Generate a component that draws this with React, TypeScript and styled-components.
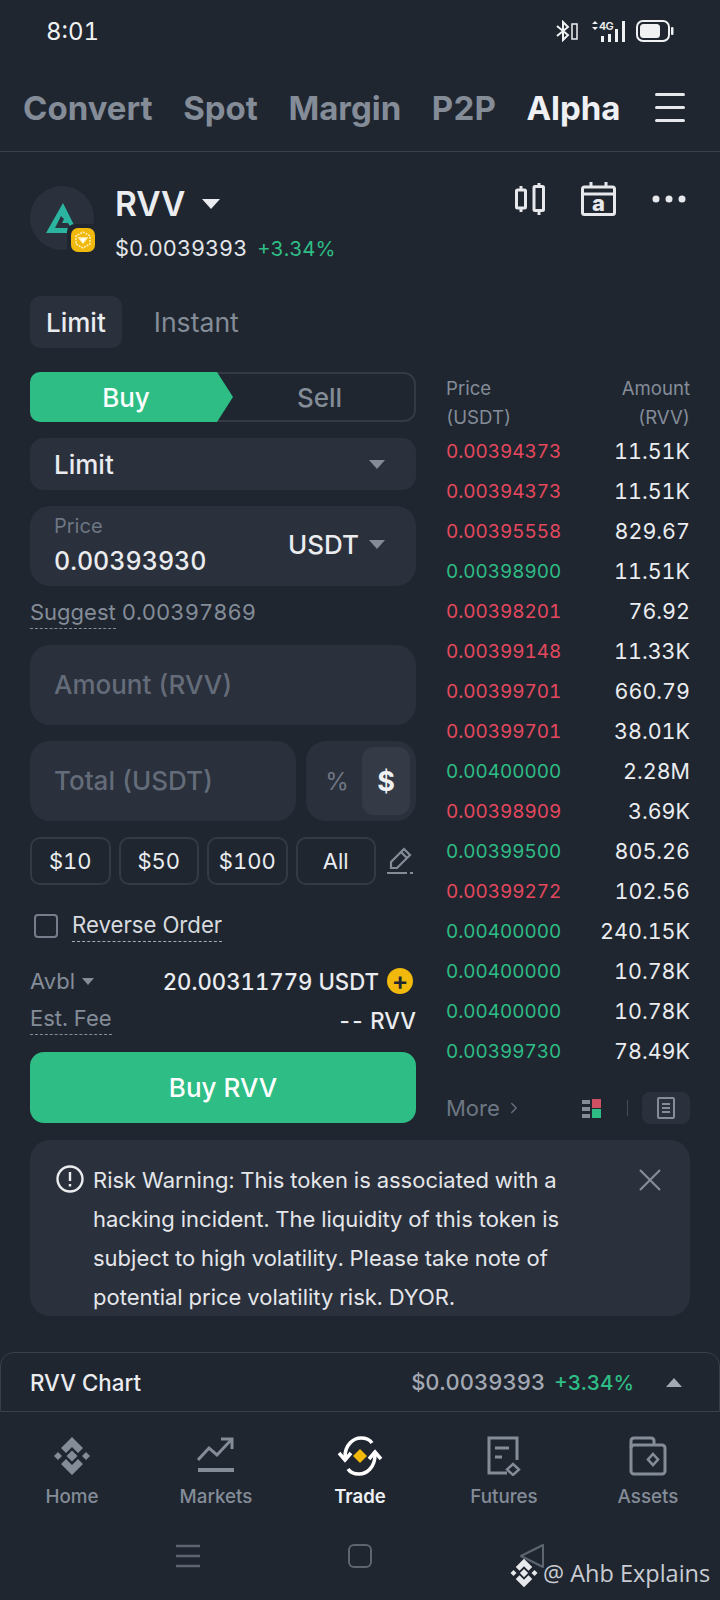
import styled, { createGlobalStyle } from "styled-components";
import { ChevronRight } from "lucide-react";

const GlobalStyle = createGlobalStyle`
  html, body {
    margin: 0;
    padding: 0;
    background: #1f2630;
  }
  * { box-sizing: border-box; }
`;

const Page = styled.div`
  position: relative;
  width: 720px;
  height: 1600px;
  overflow: hidden;
  background: #1f2630;
  color: #eaecef;
  font-family: Inter, "Liberation Sans", sans-serif;
  font-variant-numeric: tabular-nums;
`;

const StatusBar = styled.div`
  height: 62px;
  padding: 0 46px 0 46px;
  display: flex;
  align-items: center;
  justify-content: space-between;
`;
const Clock = styled.span`
  font-size: 24px;
  color: #f0f1f3;
`;
const StatusIcons = styled.div`
  display: flex;
  align-items: center;
  gap: 9px;
`;

const TopTabs = styled.div`
  height: 90px;
  padding: 2px 35px 0 23px;
  display: flex;
  align-items: center;
  gap: 30.5px;
  border-bottom: 1px solid #39404b;
`;
const TopTab = styled.span<{ $active?: boolean }>`
  font-size: 33px;
  font-weight: 700;
  color: ${(p) => (p.$active ? "#eef0f3" : "#848c98")};
`;
const Burger = styled.div`
  margin-left: auto;
  width: 30px;
  flex: none;
  display: flex;
  flex-direction: column;
  gap: 10px;
  span {
    height: 3px;
    border-radius: 2px;
    background: #e6e8ec;
  }
`;

const Header = styled.div`
  height: 144px;
  padding: 34px 30px 0;
  display: flex;
  justify-content: space-between;
`;
const Coin = styled.div`
  display: flex;
  gap: 21px;
`;
const Avatar = styled.div`
  position: relative;
  width: 64px;
  height: 64px;
  border-radius: 50%;
  background: #2a303c;
  display: flex;
  align-items: center;
  justify-content: center;
`;
const Badge = styled.div`
  position: absolute;
  right: -3px;
  bottom: -4px;
  width: 30px;
  height: 30px;
  padding: 4px;
  border-radius: 8px 0 0 0;
  background: #1f2630;
`;
const BadgeInner = styled.div`
  width: 24px;
  height: 24px;
  border-radius: 7px;
  background: #f0b90b;
  display: flex;
  align-items: center;
  justify-content: center;
`;
const CoinText = styled.div`
  display: flex;
  flex-direction: column;
  gap: 13px;
`;
const CoinName = styled.div`
  display: flex;
  align-items: center;
  gap: 17px;
  font-size: 33.5px;
  font-weight: 600;
  line-height: 36px;
`;
const CoinPrice = styled.div`
  display: flex;
  align-items: baseline;
  gap: 10px;
  font-size: 21.7px;
  line-height: 26px;
  color: #e4e6ea;
`;
const Up = styled.span`
  color: #2ebd85;
  font-size: 0.94em;
`;
const Tools = styled.div`
  margin: -4px 4px 0 0;
  display: flex;
  align-items: flex-start;
  gap: 36px;
`;

const Modes = styled.div`
  padding: 0 30px;
  display: flex;
  gap: 16px;
`;
const Mode = styled.div<{ $active?: boolean }>`
  height: 52px;
  padding: 0 16px;
  display: flex;
  align-items: center;
  border-radius: 10px;
  font-size: ${(p) => (p.$active ? 26 : 26.6)}px;
  font-weight: ${(p) => (p.$active ? 500 : 400)};
  background: ${(p) => (p.$active ? "#2a303c" : "transparent")};
  color: ${(p) => (p.$active ? "#eaecef" : "#848c98")};
`;

const Main = styled.div`
  margin-top: 24px;
  padding: 0 30px;
  display: grid;
  grid-template-columns: 386px 244px;
  column-gap: 30px;
`;
const Left = styled.div`
  display: flex;
  flex-direction: column;
`;

const Segment = styled.div`
  height: 50px;
  display: flex;
  align-items: center;
  border: 2px solid #333a45;
  border-radius: 12px;
`;
const BuyTab = styled.div`
  width: 203px;
  height: 50px;
  margin: 0 0 0 -2px;
  flex: none;
  display: flex;
  align-items: center;
  justify-content: center;
  padding-right: 11px;
  border-radius: 10px 0 0 10px;
  background: #2ebd85;
  color: #fff;
  font-size: 26px;
  font-weight: 500;
  clip-path: polygon(0 0, 187px 0, 203px 50%, 187px 100%, 0 100%);
`;
const SellTab = styled.div`
  flex: 1;
  padding-right: 8px;
  text-align: center;
  font-size: 26px;
  font-weight: 500;
  color: #848c98;
`;

const Field = styled.div<{ $h: number; $top?: number }>`
  height: ${(p) => p.$h}px;
  margin-top: ${(p) => p.$top ?? 16}px;
  padding: 0 31px 0 24px;
  display: flex;
  align-items: center;
  justify-content: space-between;
  background: #2a303c;
  border-radius: ${(p) => (p.$h > 60 ? 20 : 14)}px;
`;
const FieldValue = styled.span`
  font-size: 26px;
  font-weight: 500;
`;
const PriceValue = styled(FieldValue)`
  font-size: 25px;
`;
const Caret = styled.i<{ $size?: number; $color?: string; $up?: boolean }>`
  display: inline-block;
  width: 0;
  height: 0;
  border-left: ${(p) => p.$size ?? 8}px solid transparent;
  border-right: ${(p) => p.$size ?? 8}px solid transparent;
  border-${(p) => (p.$up ? "bottom" : "top")}: ${(p) => (p.$size ?? 8) + 1}px solid ${(p) => p.$color ?? "#848c98"};
`;
const PriceStack = styled.div`
  display: flex;
  flex-direction: column;
  gap: 8px;
  margin-top: -3px;
`;
const FieldLabel = styled.span`
  font-size: 20px;
  color: #6e7683;
`;
const Unit = styled.div`
  display: flex;
  align-items: center;
  gap: 10px;
  margin-top: -4px;
`;
const Suggest = styled.div`
  height: 59px;
  padding-top: 13px;
  font-size: 22px;
  color: #848c98;
`;
const Dashed = styled.span<{ $light?: boolean }>`
  padding-bottom: 3px;
  border-bottom: 1px dashed ${(p) => (p.$light ? "#a4a9b2" : "#848c98")};
`;
const Placeholder = styled.span`
  font-size: 26px;
  font-weight: 500;
  color: #646c79;
`;

const TotalRow = styled.div`
  margin-top: 16px;
  display: grid;
  grid-template-columns: 266px 110px;
  column-gap: 10px;
`;
const TotalField = styled.div`
  height: 80px;
  padding: 0 24px 2px;
  display: flex;
  align-items: center;
  background: #2a303c;
  border-radius: 20px;
`;
const UnitSwitch = styled.div`
  height: 80px;
  padding: 6px;
  display: flex;
  align-items: center;
  justify-content: space-between;
  background: #2a303c;
  border-radius: 20px;
  color: #6e7683;
  font-size: 24px;
  span {
    margin: 0 auto;
  }
`;
const UnitOn = styled.div`
  width: 48px;
  height: 68px;
  flex: none;
  display: flex;
  align-items: center;
  justify-content: center;
  border-radius: 12px;
  background: #343b47;
  color: #f0f1f3;
  font-size: 27px;
  font-weight: 700;
`;

const Quick = styled.div`
  margin-top: 16px;
  display: flex;
  align-items: center;
  gap: 8px;
`;
const QuickBtn = styled.div`
  width: 80.5px;
  height: 48px;
  display: flex;
  align-items: center;
  justify-content: center;
  border: 2px solid #333a45;
  border-radius: 10px;
  font-size: 22px;
`;
const Pencil = styled.svg`
  margin-left: 2px;
`;

const Reverse = styled.div`
  height: 48px;
  margin-top: 17px;
  padding-left: 4px;
  display: flex;
  align-items: center;
  gap: 14px;
  font-size: 22.2px;
  color: #d7dade;
`;
const Check = styled.div`
  width: 24px;
  height: 24px;
  border: 2px solid #767e8b;
  border-radius: 4px;
`;

const InfoRow = styled.div<{ $top: number }>`
  height: 30px;
  margin-top: ${(p) => p.$top}px;
  display: flex;
  align-items: center;
  justify-content: space-between;
`;
const InfoLabel = styled.span`
  display: flex;
  align-items: center;
  gap: 7px;
  font-size: 22px;
  color: #848c98;
`;
const InfoValue = styled.span`
  display: flex;
  align-items: center;
  gap: 8px;
  font-size: 22.2px;
  font-weight: 500;
`;
const Dashes = styled.span`
  margin-right: -1px;
  letter-spacing: -1.5px;
`;
const Plus = styled.span`
  width: 26px;
  height: 26px;
  margin-right: 3px;
  display: flex;
  align-items: center;
  justify-content: center;
  border-radius: 50%;
  background: #f0b90b;
  color: #1f2630;
  font-size: 25px;
  line-height: 1;
  font-weight: 600;
`;
const BuyButton = styled.div`
  height: 71px;
  margin-top: 17px;
  display: flex;
  align-items: center;
  justify-content: center;
  border-radius: 14px;
  background: #2ebd85;
  color: #fff;
  font-size: 26px;
  font-weight: 500;
`;

const Book = styled.div`
  display: flex;
  flex-direction: column;
`;
const BookHead = styled.div`
  height: 59px;
  padding-top: 2px;
  display: flex;
  justify-content: space-between;
  font-size: 18.6px;
  line-height: 29px;
  color: #848c98;
  div:last-child {
    text-align: right;
  }
`;
const BookRow = styled.div`
  height: 40px;
  display: flex;
  align-items: center;
  justify-content: space-between;
`;
const BookPrice = styled.span<{ $side: "up" | "down" }>`
  font-size: 18.9px;
  color: ${(p) => (p.$side === "up" ? "#2ebd85" : "#e5485e")};
`;
const BookAmount = styled.span`
  font-size: 21.5px;
  color: #eaecef;
`;
const BookFoot = styled.div`
  height: 32px;
  margin-top: 21px;
  display: flex;
  align-items: center;
`;
const More = styled.span`
  display: flex;
  align-items: center;
  gap: 5px;
  font-size: 22px;
  color: #6e7683;
`;
const FootIcons = styled.div`
  margin-left: auto;
  display: flex;
  align-items: center;
  gap: 14px;
`;
const GridIcon = styled.svg`
  margin-right: 12px;
`;
const FootSep = styled.i`
  width: 1px;
  height: 16px;
  background: #454c58;
`;
const FootActive = styled.div`
  width: 48px;
  height: 32px;
  display: flex;
  align-items: center;
  justify-content: center;
  border-radius: 8px;
  background: #2a303c;
`;

const Warning = styled.div`
  height: 176px;
  margin: 16px 30px 0;
  padding: 21px 28px 0 26px;
  display: flex;
  align-items: flex-start;
  background: #2a303c;
  border-radius: 20px;
`;
const WarningIcon = styled.svg`
  flex: none;
  margin: 4px 9px 0 0;
`;
const WarningText = styled.div`
  flex: 1;
  font-size: 22px;
  line-height: 39px;
  color: #e4e6ea;
`;
const WarningClose = styled.svg`
  flex: none;
  margin-top: 7px;
`;

const ChartBar = styled.div`
  height: 60px;
  margin-top: 36px;
  padding: 0 37px 0 29px;
  display: flex;
  align-items: center;
  border: 1px solid #39404b;
  border-radius: 14px 14px 0 0;
`;
const ChartTitle = styled.span`
  font-size: 22.3px;
  font-weight: 500;
`;
const ChartPrice = styled.span`
  margin-left: auto;
  display: flex;
  align-items: baseline;
  gap: 9px;
  font-size: 22px;
  font-weight: 500;
  color: #a3a9b3;
`;
const ChartCaret = styled.span`
  margin-left: 32px;
  display: flex;
`;

const Nav = styled.div`
  height: 118px;
  display: grid;
  grid-template-columns: repeat(5, 144px);
`;
const NavItem = styled.div<{ $active?: boolean }>`
  padding-top: 24px;
  display: flex;
  flex-direction: column;
  align-items: center;
  gap: 9px;
  font-size: ${(p) => (p.$active ? 18.6 : 18.8)}px;
  font-weight: ${(p) => (p.$active ? 600 : 500)};
  color: ${(p) => (p.$active ? "#eef0f3" : "#848c98")};
  svg {
    height: 40px;
  }
`;

const SystemNav = styled.div`
  padding-top: 14px;
  display: grid;
  grid-template-columns: repeat(3, 172px);
  justify-content: center;
  justify-items: center;
`;

const Watermark = styled.div`
  position: absolute;
  left: 509px;
  top: 1557px;
  display: flex;
  align-items: center;
  gap: 4px;
  font-family: "Open Sans", sans-serif;
  font-size: 23.5px;
  color: #c9ccd2;
`;

const asks: { p: string; a: string; s: "up" | "down" }[] = [
  { p: "0.00394373", a: "11.51K", s: "down" },
  { p: "0.00394373", a: "11.51K", s: "down" },
  { p: "0.00395558", a: "829.67", s: "down" },
  { p: "0.00398900", a: "11.51K", s: "up" },
  { p: "0.00398201", a: "76.92", s: "down" },
  { p: "0.00399148", a: "11.33K", s: "down" },
  { p: "0.00399701", a: "660.79", s: "down" },
  { p: "0.00399701", a: "38.01K", s: "down" },
  { p: "0.00400000", a: "2.28M", s: "up" },
  { p: "0.00398909", a: "3.69K", s: "down" },
  { p: "0.00399500", a: "805.26", s: "up" },
  { p: "0.00399272", a: "102.56", s: "down" },
  { p: "0.00400000", a: "240.15K", s: "up" },
  { p: "0.00400000", a: "10.78K", s: "up" },
  { p: "0.00400000", a: "10.78K", s: "up" },
  { p: "0.00399730", a: "78.49K", s: "up" },
];

function BinanceMark({ size = 40, color = "#848c98" }: { size?: number; color?: string }) {
  return (
    <svg width={size} height={size} viewBox="0 0 40 40" fill={color}>
      <path d="M20 1 31 12 26 17 20 11 14 17 9 12Z" />
      <path d="M20 39 31 28 26 23 20 29 14 23 9 28Z" />
      <path d="M20 14.5 25.5 20 20 25.5 14.5 20Z" />
      <path d="M6 16 10 20 6 24 2 20Z" />
      <path d="M34 16 38 20 34 24 30 20Z" />
    </svg>
  );
}

function App() {
  return (
    <Page>
      <GlobalStyle />
      <StatusBar>
        <Clock>8:01</Clock>
        <StatusIcons>
          <svg width="24" height="22" viewBox="0 0 24 22" fill="none" stroke="#f0f1f3" strokeWidth="2">
            <path d="M1 6 12 15 7 20V2L12 7 1 16" />
            <rect x="16" y="4" width="5" height="15" strokeWidth="1.5" />
          </svg>
          <svg width="38" height="24" viewBox="0 0 38 24" fill="#f0f1f3">
            <path d="M3 5 6 2 9 5ZM3 8 6 11 9 8Z" />
            <text x="10" y="11" fontSize="11" fontWeight="600" fontFamily="Inter, sans-serif" letterSpacing="-0.5">4G</text>
            <rect x="12" y="17" width="3" height="6" />
            <rect x="19" y="15" width="3" height="8" />
            <rect x="26" y="10" width="3" height="13" />
            <rect x="33" y="2" width="3" height="21" />
          </svg>
          <svg width="38" height="22" viewBox="0 0 38 22" fill="none">
            <rect x="1" y="1" width="32" height="20" rx="6" stroke="#f0f1f3" strokeWidth="2" />
            <rect x="4" y="4" width="20" height="14" rx="3.5" fill="#f0f1f3" />
            <rect x="35" y="7" width="2.5" height="8" rx="1" fill="#f0f1f3" />
          </svg>
        </StatusIcons>
      </StatusBar>

      <TopTabs>
        <TopTab>Convert</TopTab>
        <TopTab>Spot</TopTab>
        <TopTab>Margin</TopTab>
        <TopTab>P2P</TopTab>
        <TopTab $active>Alpha</TopTab>
        <Burger>
          <span />
          <span />
          <span />
        </Burger>
      </TopTabs>

      <Header>
        <Coin>
          <Avatar>
            <svg width="32" height="30" viewBox="0 0 32 30" fill="#2bb5a0" fillRule="evenodd">
              <path d="M17 0 32 30H0ZM15 13 9 25H25L22 20H16L18 16Z" />
            </svg>
            <Badge>
              <BadgeInner>
                <svg width="16" height="18" viewBox="0 0 16 18" fill="none" stroke="#fff3c8" strokeWidth="1.4">
                  <path d="M8 1 15 5V13L8 17 1 13V5Z" strokeDasharray="2 1" />
                  <path d="M4 7H12L8 12Z" fill="#fff" />
                </svg>
              </BadgeInner>
            </Badge>
          </Avatar>
          <CoinText>
            <CoinName>
              RVV
              <Caret $size={9} $color="#eaecef" />
            </CoinName>
            <CoinPrice>
              $0.0039393 <Up>+3.34%</Up>
            </CoinPrice>
          </CoinText>
        </Coin>
        <Tools>
          <svg width="30" height="34" viewBox="0 0 30 34" fill="none" stroke="#e6e8ec" strokeWidth="3">
            <rect x="1.5" y="8" width="9" height="18" rx="1" />
            <path d="M6 4V8M6 26V30" />
            <rect x="19" y="4.5" width="9.5" height="24" rx="1" />
            <path d="M24 1V4.5M24 28.5V33" />
          </svg>
          <svg width="35" height="34" viewBox="0 0 35 34" fill="none" stroke="#e6e8ec" strokeWidth="3">
            <rect x="1.5" y="5" width="32" height="27.5" rx="2" />
            <path d="M1.5 12H33.5M10 0V5M25 0V5" />
            <text x="17.5" y="29" fontSize="22" fontWeight="800" fill="#e6e8ec" stroke="none" textAnchor="middle" fontFamily="Inter, sans-serif">a</text>
          </svg>
          <svg width="34" height="34" viewBox="0 0 34 34" fill="#e6e8ec">
            <circle cx="4" cy="17" r="3.5" />
            <circle cx="17" cy="17" r="3.5" />
            <circle cx="30" cy="17" r="3.5" />
          </svg>
        </Tools>
      </Header>

      <Modes>
        <Mode $active>Limit</Mode>
        <Mode>Instant</Mode>
      </Modes>

      <Main>
        <Left>
          <Segment>
            <BuyTab>Buy</BuyTab>
            <SellTab>Sell</SellTab>
          </Segment>
          <Field $h={52}>
            <FieldValue>Limit</FieldValue>
            <Caret />
          </Field>
          <Field $h={80}>
            <PriceStack>
              <FieldLabel>Price</FieldLabel>
              <PriceValue>0.00393930</PriceValue>
            </PriceStack>
            <Unit>
              <FieldValue>USDT</FieldValue>
              <Caret />
            </Unit>
          </Field>
          <Suggest>
            <Dashed>Suggest</Dashed> 0.00397869
          </Suggest>
          <TotalField>
            <Placeholder>Amount (RVV)</Placeholder>
          </TotalField>
          <TotalRow>
            <TotalField>
              <Placeholder>Total (USDT)</Placeholder>
            </TotalField>
            <UnitSwitch>
              <span>%</span>
              <UnitOn>$</UnitOn>
            </UnitSwitch>
          </TotalRow>
          <Quick>
            <QuickBtn>$10</QuickBtn>
            <QuickBtn>$50</QuickBtn>
            <QuickBtn>$100</QuickBtn>
            <QuickBtn>All</QuickBtn>
            <Pencil width="28" height="28" viewBox="0 0 28 28" fill="none" stroke="#848c98" strokeWidth="2.2">
              <path d="M5 21V15L18 2 24 8 11 21Z" />
              <path d="M15 5 21 11" />
              <path d="M1 26H21M24 26H27" />
            </Pencil>
          </Quick>
          <Reverse>
            <Check />
            <Dashed $light>Reverse Order</Dashed>
          </Reverse>
          <InfoRow $top={16}>
            <InfoLabel>
              Avbl <Caret $size={6.5} />
            </InfoLabel>
            <InfoValue>
              20.00311779 USDT <Plus>+</Plus>
            </InfoValue>
          </InfoRow>
          <InfoRow $top={9}>
            <InfoLabel>
              <Dashed>Est. Fee</Dashed>
            </InfoLabel>
            <InfoValue>
              <Dashes>--</Dashes> RVV
            </InfoValue>
          </InfoRow>
          <BuyButton>Buy RVV</BuyButton>
        </Left>

        <Book>
          <BookHead>
            <div>
              Price
              <br />
              (USDT)
            </div>
            <div>
              Amount
              <br />
              (RVV)
            </div>
          </BookHead>
          {asks.map((row, i) => (
            <BookRow key={i}>
              <BookPrice $side={row.s}>{row.p}</BookPrice>
              <BookAmount>{row.a}</BookAmount>
            </BookRow>
          ))}
          <BookFoot>
            <More>
              More <ChevronRight size={18} strokeWidth={1.6} />
            </More>
            <FootIcons>
              <GridIcon width="19" height="19" viewBox="0 0 19 19">
                <rect x="0" y="1" width="8" height="4" fill="#848c98" />
                <rect x="0" y="8" width="8" height="4" fill="#848c98" />
                <rect x="0" y="15" width="8" height="4" fill="#848c98" />
                <rect x="10" y="0" width="9" height="9" fill="#cf4f63" />
                <rect x="10" y="10" width="9" height="9" fill="#2ebd85" />
              </GridIcon>
              <FootSep />
              <FootActive>
                <svg width="18" height="22" viewBox="0 0 18 22" fill="none" stroke="#848c98" strokeWidth="2">
                  <rect x="1" y="1" width="16" height="20" rx="1" />
                  <path d="M5 7H13M5 11H13M5 15H13" />
                </svg>
              </FootActive>
            </FootIcons>
          </BookFoot>
        </Book>
      </Main>

      <Warning>
        <WarningIcon width="28" height="28" viewBox="0 0 28 28" fill="none" stroke="#eaecef" strokeWidth="2.4">
          <circle cx="14" cy="14" r="12.5" />
          <path d="M14 7V16M14 19V21.5" />
        </WarningIcon>
        <WarningText>
          Risk Warning: This token is associated with a
          <br />
          hacking incident. The liquidity of this token is
          <br />
          subject to high volatility. Please take note of
          <br />
          potential price volatility risk. DYOR.
        </WarningText>
        <WarningClose width="24" height="24" viewBox="0 0 24 24" stroke="#848c98" strokeWidth="2.2">
          <path d="M2 2 22 22M22 2 2 22" />
        </WarningClose>
      </Warning>

      <ChartBar>
        <ChartTitle>RVV Chart</ChartTitle>
        <ChartPrice>
          $0.0039393 <Up>+3.34%</Up>
        </ChartPrice>
        <ChartCaret>
          <Caret $up $color="#a3a9b3" />
        </ChartCaret>
      </ChartBar>

      <Nav>
        <NavItem>
          <BinanceMark />
          Home
        </NavItem>
        <NavItem>
          <svg width="38" height="40" viewBox="0 0 38 40" fill="none" stroke="#848c98" strokeWidth="3">
            <path d="M1 24 12 12 20 19 34 4" />
            <path d="M24 3H35V13" />
            <path d="M1 34H37" strokeWidth="4" />
          </svg>
          Markets
        </NavItem>
        <NavItem $active>
          <svg width="48" height="40" viewBox="0 0 48 40" fill="none" stroke="#fff" strokeWidth="3.5">
            <path d="M9 21C9 9 17 2 25 2 30 2 34 4 36 7" />
            <path d="M3 17 9 24 15 17" />
            <path d="M39 19C39 31 31 38 23 38 18 38 14 36 12 33" />
            <path d="M45 23 39 16 33 23" />
            <path d="M24 13 31 20 24 27 17 20Z" fill="#f0b90b" stroke="none" />
          </svg>
          Trade
        </NavItem>
        <NavItem>
          <svg width="34" height="40" viewBox="0 0 34 40" fill="none" stroke="#848c98" strokeWidth="3">
            <path d="M20 37H2V2H30V24" />
            <path d="M8 12H22M8 21H15" />
            <path d="M26 28 32 33.5 26 39 20 33.5Z" strokeWidth="2.4" />
          </svg>
          Futures
        </NavItem>
        <NavItem>
          <svg width="38" height="40" viewBox="0 0 38 40" fill="none" stroke="#848c98" strokeWidth="3">
            <rect x="2" y="9" width="34" height="29" rx="3" />
            <path d="M2 12V5C2 3 3 2 5 2H22C24 2 25 3 25 5V9" />
            <path d="M24 18 29 23.5 24 29 19 23.5Z" strokeWidth="2.6" />
          </svg>
          Assets
        </NavItem>
      </Nav>

      <SystemNav>
        <svg width="24" height="24" viewBox="0 0 24 24" stroke="#5d6571" strokeWidth="2.4">
          <path d="M0 2H24M0 12H24M0 22H24" />
        </svg>
        <svg width="24" height="24" viewBox="0 0 24 24" fill="none" stroke="#5d6571" strokeWidth="2">
          <rect x="1" y="1" width="22" height="22" rx="5" />
        </svg>
        <svg width="24" height="24" viewBox="0 0 24 24" fill="none" stroke="#5d6571" strokeWidth="2">
          <path d="M23 1V23L1 12Z" strokeLinejoin="round" />
        </svg>
      </SystemNav>

      <Watermark>
        <BinanceMark size={30} color="#e6e8ec" />
        @ Ahb Explains
      </Watermark>
    </Page>
  );
}

export default App;
